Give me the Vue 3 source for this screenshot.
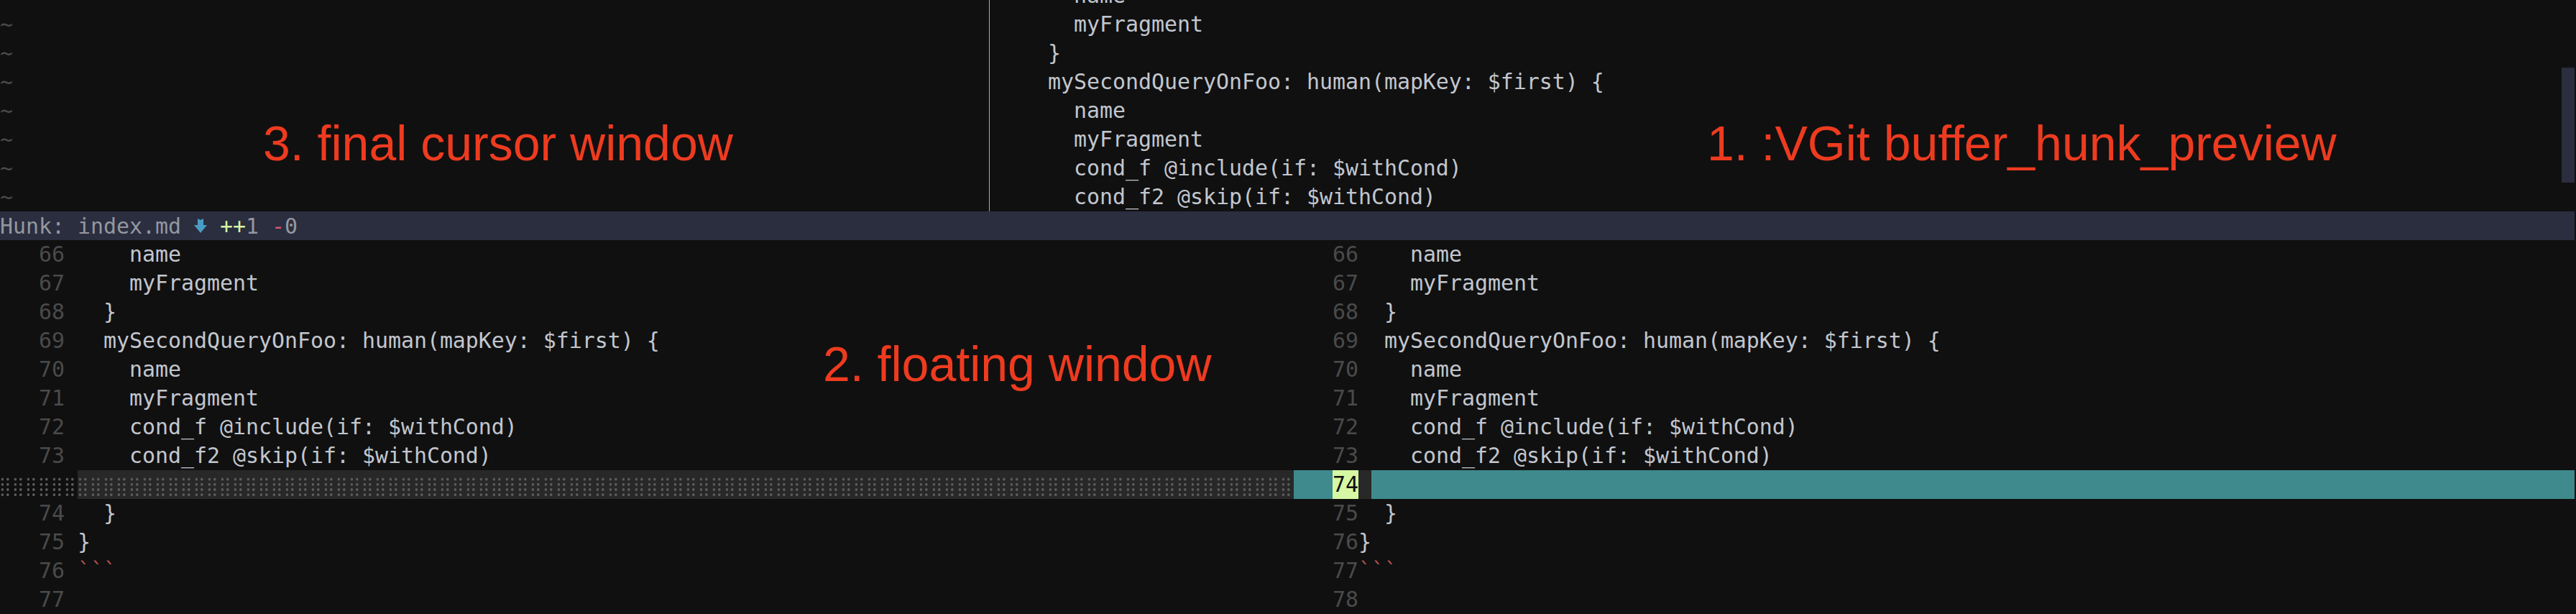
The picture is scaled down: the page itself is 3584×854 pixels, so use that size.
<script setup>
const tildes = 7
const topLines = [
  '  name',
  '  myFragment',
  '}',
  'mySecondQueryOnFoo: human(mapKey: $first) {',
  '  name',
  '  myFragment',
  '  cond_f @include(if: $withCond)',
  '  cond_f2 @skip(if: $withCond)'
]
const block = [
  '    name',
  '    myFragment',
  '  }',
  '  mySecondQueryOnFoo: human(mapKey: $first) {',
  '    name',
  '    myFragment',
  '    cond_f @include(if: $withCond)',
  '    cond_f2 @skip(if: $withCond)'
]
const rows = block.map((text, i) => ({ n: 66 + i, text }))
const leftTail = [
  { n: 74, text: '  }' },
  { n: 75, text: '}' },
  { n: 76, text: '```', tick: true },
  { n: 77, text: '' }
]
const rightTail = [
  { n: 75, text: '  }' },
  { n: 76, text: '}' },
  { n: 77, text: '```', tick: true },
  { n: 78, text: '' }
]
</script>

<template>
  <div class="screen">
    <section class="top">
      <div class="final">
        <div v-for="i in tildes" :key="i" class="row tilde">~</div>
      </div>
      <div class="preview">
        <div class="preview-lines">
          <div v-for="(l, i) in topLines" :key="i" class="row code">{{ l }}</div>
        </div>
        <div class="scrollbar"></div>
      </div>
    </section>

    <header class="status">
      <span>Hunk: index.md </span>
      <svg class="arrow" width="18" height="20" viewBox="0 0 18 20"><polygon points="5,0 9,2 13,0 13,9 18,9 9,20 0,9 5,9" fill="#4b9cc4" /></svg>
      <span class="plus">++</span><span>1 </span><span class="minus">-</span><span>0</span>
    </header>

    <section class="bottom">
      <div class="pane left">
        <div v-for="r in rows" :key="r.n" class="row">
          <span class="num">{{ r.n }}</span><span class="code">{{ r.text }}</span>
        </div>
        <div class="row filler">
          <div class="gutter"><div class="dots"></div></div>
          <div class="shaded"><div class="dots"></div></div>
        </div>
        <div v-for="r in leftTail" :key="r.n" class="row">
          <span class="num">{{ r.n }}</span><span class="code" :class="{ tick: r.tick }">{{ r.text }}</span>
        </div>
      </div>
      <div class="pane right">
        <div v-for="r in rows" :key="r.n" class="row">
          <span class="num">{{ r.n }}</span><span class="code">{{ r.text }}</span>
        </div>
        <div class="row current">
          <span class="cur-num">74</span><span class="cur-sign"></span>
        </div>
        <div v-for="r in rightTail" :key="r.n" class="row">
          <span class="num">{{ r.n }}</span><span class="code" :class="{ tick: r.tick }">{{ r.text }}</span>
        </div>
      </div>
    </section>

    <div class="note n3">3. final cursor window</div>
    <div class="note n1">1. :VGit buffer_hunk_preview</div>
    <div class="note n2">2. floating window</div>
  </div>
</template>

<style>
html, body { margin: 0; background: #101010; }
</style>

<style scoped>
.screen {
  position: relative;
  width: 3584px;
  height: 854px;
  overflow: hidden;
  background: #101010;
  color: #c2c6ce;
  font-family: "DejaVu Sans Mono", monospace;
  font-size: 29.9px;
}
.row {
  display: flex;
  height: 40px;
  line-height: 40px;
  white-space: pre;
}
.top {
  display: flex;
  height: 294px;
  width: 3582px;
}
.final {
  width: 1376px;
  flex: none;
  padding-top: 14px;
  border-right: 1px solid #a8a8a8;
}
.tilde { color: #4a4a4a; }
.preview {
  flex: 1;
  position: relative;
  overflow: hidden;
  padding-left: 81px;
}
.preview-lines { margin-top: -26px; }
.scrollbar {
  position: absolute;
  right: 0;
  top: 94px;
  width: 18px;
  height: 160px;
  background: #2a2e3f;
}
.status {
  display: flex;
  align-items: center;
  height: 40px;
  width: 3582px;
  background: #2a2e3f;
  color: #94979f;
  white-space: pre;
}
.arrow { flex: none; margin-right: 18px; }
.plus { color: #d6f7a3; }
.minus { color: #d9567f; }
.bottom {
  display: flex;
  width: 3582px;
}
.pane.left { width: 1800px; flex: none; }
.pane.right { flex: 1; }
.num {
  flex: none;
  width: 90px;
  text-align: right;
  color: #4a4a4a;
}
.left .num { margin-right: 18px; }
.gutter { width: 108px; flex: none; }
.shaded { flex: 1; background: #282828; }
.dots {
  height: 29px;
  margin-top: 9px;
  background-image:
    radial-gradient(circle at 3.4px 3.6px, #5c5c5c 1.5px, transparent 2.1px),
    radial-gradient(circle at 10.8px 3.6px, #5c5c5c 1.5px, transparent 2.1px);
  background-size: 18px 7.2px;
}
.current { background: #3e8a8c; padding-left: 54px; }
.cur-num {
  width: 36px;
  background: #d6f7a3;
  color: #101010;
}
.cur-sign { width: 18px; background: #282828; }
.tick { color: #b0524f; }
.note {
  position: absolute;
  font-family: "Liberation Sans", Arial, sans-serif;
  font-size: 68px;
  line-height: 76px;
  color: #ee3b20;
  white-space: nowrap;
}
.n3 { left: 366px; top: 161px; }
.n1 { left: 2375px; top: 161px; }
.n2 { left: 1145px; top: 468px; }
</style>
